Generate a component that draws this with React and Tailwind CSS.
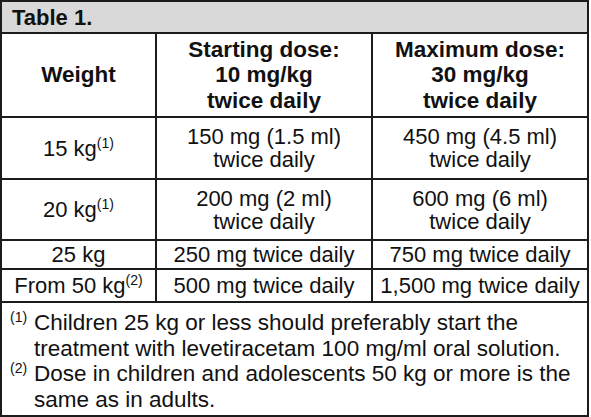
import React from "react";

const Sup = ({ children }) => (
  <span className="relative -top-[8px] text-[14px] leading-none">{children}</span>
);

function Row({ h, a, b, c, lh = "leading-[23px]" }) {
  return (
    <div className={`flex border-b-2 border-[#1c1c1c] ${h} ${lh}`}>
      <div className="w-[155px] border-r-2 border-[#1c1c1c] flex items-center justify-center text-center">{a}</div>
      <div className="w-[216px] border-r-2 border-[#1c1c1c] flex items-center justify-center text-center">{b}</div>
      <div className="flex-1 flex items-center justify-center text-center">{c}</div>
    </div>
  );
}

export default function App() {
  return (
    <div className="bg-white w-[591px] h-[417px]">
      <div
        className="w-[589px] h-[417px] border-2 border-[#1c1c1c] flex flex-col text-[22px] text-[#111]"
        style={{ fontFamily: '"Liberation Sans", Arial, sans-serif' }}
      >
        <div className="h-[32px] border-b-2 border-[#1c1c1c] bg-[#d9d9d9] flex items-center pl-[10px] font-bold">
          Table 1.
        </div>
        <Row
          h="h-[84px]"
          lh="leading-[25.5px] font-bold text-[22.5px]"
          a={<span>Weight</span>}
          b={<span>Starting dose:<br />10 mg/kg<br />twice daily</span>}
          c={<span>Maximum dose:<br />30 mg/kg<br />twice daily</span>}
        />
        <Row
          h="h-[62px]"
          a={<span>15 kg<Sup>(1)</Sup></span>}
          b={<span>150 mg (1.5 ml)<br />twice daily</span>}
          c={<span>450 mg (4.5 ml)<br />twice daily</span>}
        />
        <Row
          h="h-[61px]"
          a={<span>20 kg<Sup>(1)</Sup></span>}
          b={<span>200 mg (2 ml)<br />twice daily</span>}
          c={<span>600 mg (6 ml)<br />twice daily</span>}
        />
        <Row
          h="h-[29px]"
          a={<span>25 kg</span>}
          b={<span>250 mg twice daily</span>}
          c={<span>750 mg twice daily</span>}
        />
        <Row
          h="h-[33px]"
          a={<span>From 50 kg<Sup>(2)</Sup></span>}
          b={<span>500 mg twice daily</span>}
          c={<span>1,500 mg twice daily</span>}
        />
        <div className="flex-1 pt-[7px] pl-[8px] leading-[25.5px] text-[22.5px]">
          <div className="flex">
            <span className="w-[24px] shrink-0"><Sup>(1)</Sup></span>
            <span>Children 25 kg or less should preferably start the treatment with levetiracetam 100 mg/ml oral solution.</span>
          </div>
          <div className="flex">
            <span className="w-[24px] shrink-0"><Sup>(2)</Sup></span>
            <span>Dose in children and adolescents 50 kg or more is the same as in adults.</span>
          </div>
        </div>
      </div>
    </div>
  );
}
